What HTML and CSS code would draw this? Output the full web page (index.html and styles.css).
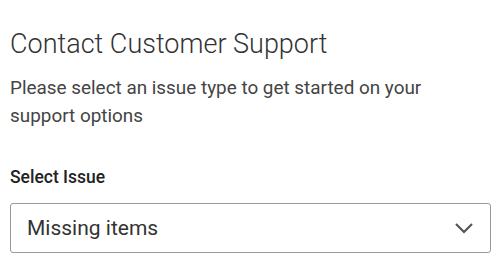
FILE: index.html
```html
<!DOCTYPE html>
<html>
<head>
<meta charset="utf-8">
<link rel="stylesheet" href="styles.css">
</head>
<body>
<main class="panel">
  <h1 class="title">Contact Customer Support</h1>
  <p class="desc">Please select an issue type to get started on your support options</p>
  <label class="label">Select Issue</label>
  <div class="select">
    <span class="value">Missing items</span>
    <svg class="chev" width="20" height="12" viewBox="0 0 20 12"><path d="M2 2 L10 10 L18 2" fill="none" stroke="#555" stroke-width="2.2"/></svg>
  </div>
</main>
</body>
</html>
```
FILE: styles.css
```css
html, body { margin: 0; padding: 0; background: #fff; }
body { font-family: Roboto, "Noto Sans", sans-serif; }
.panel { width: 481px; padding: 28px 0 0 10px; display: flex; flex-direction: column; }
.title { margin: 0; font-size: 27px; font-weight: 300; color: #333; line-height: 32px; }
.desc { margin: 14px 0 0; max-width: 450px; font-size: 18.9px; line-height: 28px; color: #444; }
.label { margin-top: 37px; font-size: 17.5px; font-weight: 500; color: #222; line-height: 20px; }
.select { margin-top: 16px; height: 48px; border: 1px solid #999; border-radius: 3px; display: flex; align-items: center; justify-content: space-between; padding: 0 16px 0 16px; }
.value { font-size: 21px; color: #333; }
.chev { display: block; }
```
